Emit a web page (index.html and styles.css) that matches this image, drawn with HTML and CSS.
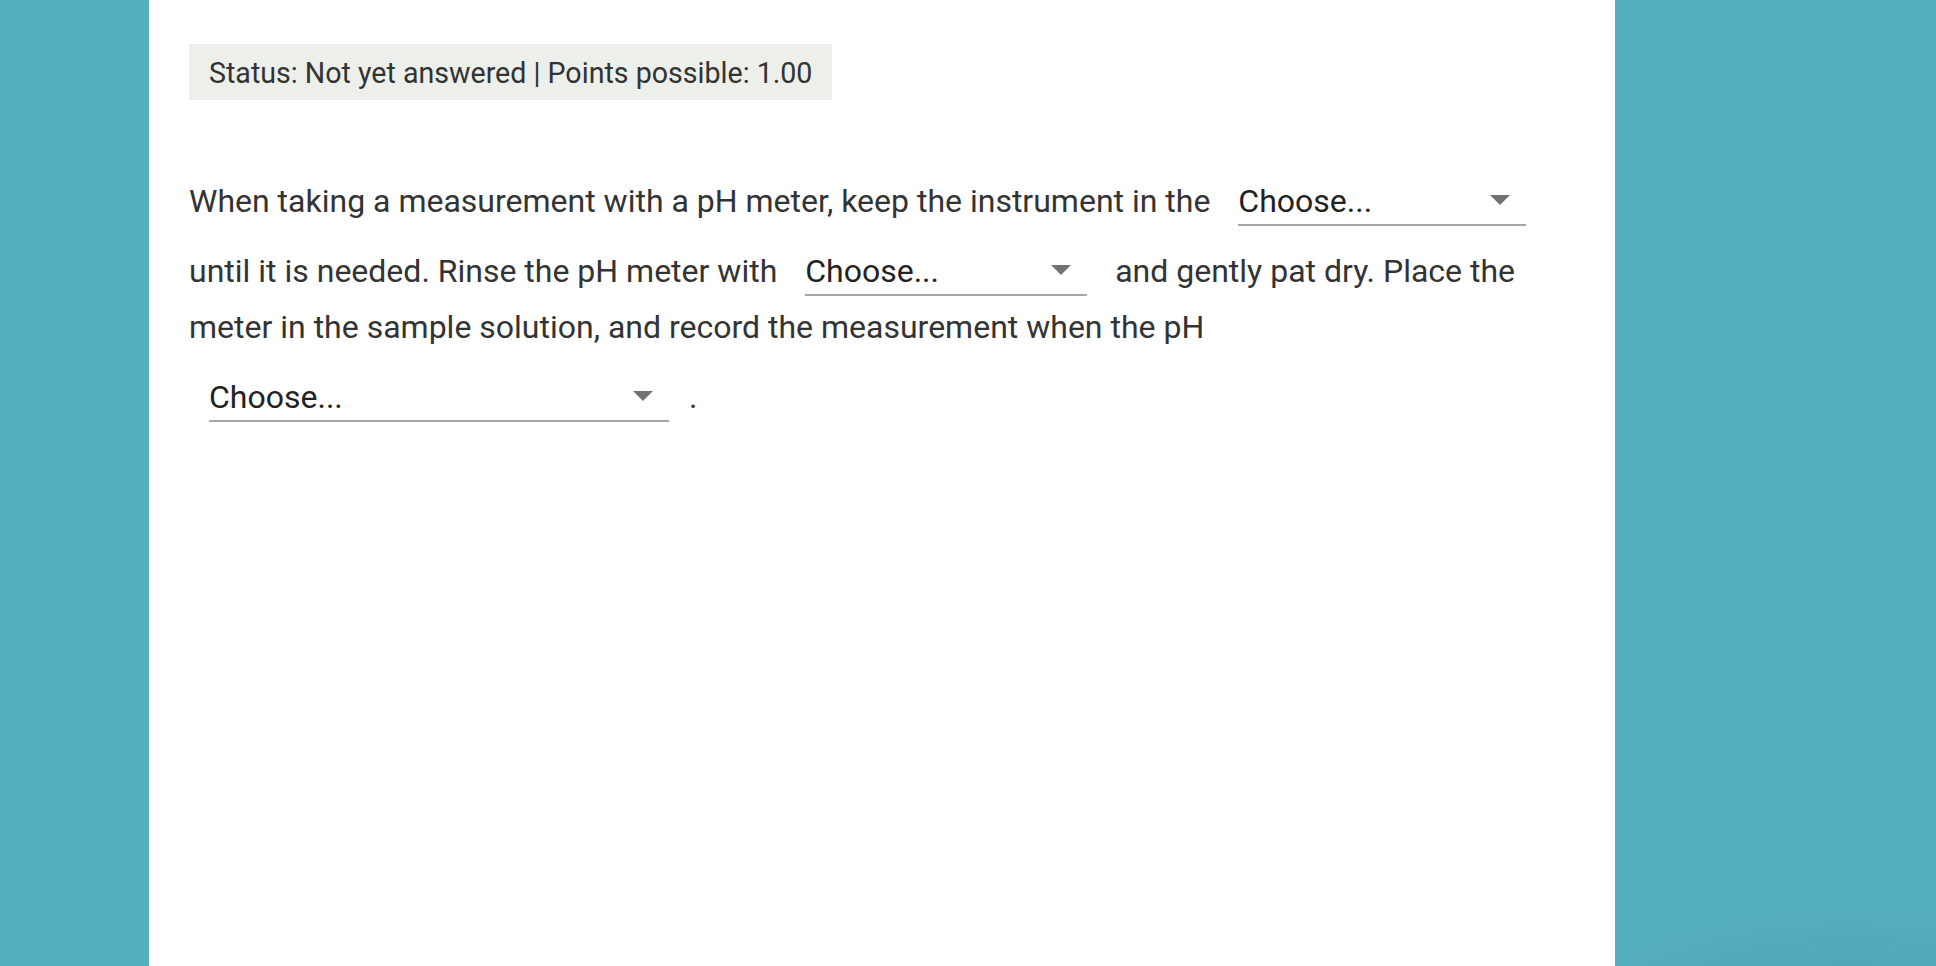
FILE: index.html
```html
<!DOCTYPE html>
<html lang="en">
<head>
    <meta charset="UTF-8">
    <meta name="viewport" content="width=device-width, initial-scale=1.0">
    <title>pH Meter Question</title>
    <link rel="stylesheet" href="styles.css">
</head>
<body>
    <main class="question-panel">
        <div class="question-status">Status: Not yet answered | Points possible: 1.00</div>

        <p class="question-text">
            When taking a measurement with a pH meter, keep the instrument in the
            <span class="dropdown dropdown-first" role="combobox"><span class="dropdown-value">Choose...</span><span class="dropdown-caret"></span></span>until it is needed. Rinse the pH meter with
            <span class="dropdown dropdown-second" role="combobox"><span class="dropdown-value">Choose...</span><span class="dropdown-caret"></span></span>and gently pat dry. Place the meter in the sample solution, and record the measurement when the pH
            <span class="dropdown dropdown-third" role="combobox"><span class="dropdown-value">Choose...</span><span class="dropdown-caret"></span></span>.
        </p>
    </main>
</body>
</html>
```

FILE: styles.css
```css
* {
    margin: 0;
    padding: 0;
    box-sizing: border-box;
}

body {
    font-family: Roboto, "Liberation Sans", sans-serif;
    color: #333333;
    min-height: 100vh;
    background:
        radial-gradient(ellipse 260px 90px at 1850px 1000px, rgba(0, 0, 0, 0.07), rgba(0, 0, 0, 0)),
        #54afbf;
}

.question-panel {
    margin-left: 149px;
    width: 1466px;
    min-height: 100vh;
    background: #ffffff;
    padding: 44px 40px;
}

.question-status {
    width: fit-content;
    background: #ecefea;
    font-size: 28.6px;
    line-height: 43px;
    padding: 7.5px 20px 5.5px;
    color: #333333;
}

.question-text {
    margin-top: 59px;
    font-size: 32px;
    line-height: 56px;
}

/* answer dropdowns sit inline with the sentence */
.dropdown {
    display: inline-block;
    position: relative;
    vertical-align: baseline;
    margin: 0 28px 0 20px;
    padding: 23px 0 4px;
    line-height: 38px;
    border-bottom: 2px solid #a6a6a6;
    color: #222222;
    cursor: pointer;
}

.dropdown-first {
    width: 288px;
}

.dropdown-second {
    width: 282px;
}

.dropdown-third {
    width: 460px;
    margin-right: 20px;
}

.dropdown-caret {
    position: absolute;
    top: 36px;
    right: 16px;
    width: 0;
    height: 0;
    border-left: 10px solid transparent;
    border-right: 10px solid transparent;
    border-top: 10px solid #727272;
}
```
